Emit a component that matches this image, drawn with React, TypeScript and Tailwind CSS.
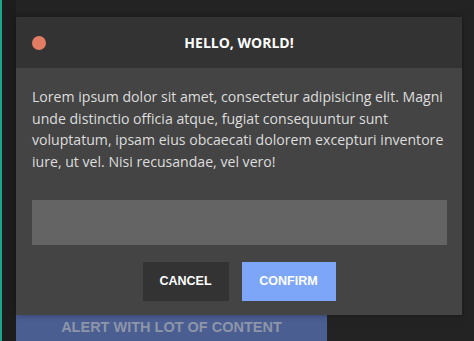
const bodyFont = { fontFamily: '"Open Sans", "Noto Sans", sans-serif' };

function ModalButton({ label, primary = false }: { label: string; primary?: boolean }) {
  const className = primary
    ? 'flex h-[39px] w-[94px] items-center justify-center bg-[#7ea6f8] text-[12.5px] font-bold text-white'
    : 'flex h-[39px] w-[86px] items-center justify-center bg-[#333333] text-[12.5px] font-bold text-white';

  return (
    <button type="button" className={className} style={{ fontFamily: '"Liberation Sans", Arial, sans-serif' }}>
      {label}
    </button>
  );
}

export default function App() {
  return (
    <div className="relative flex h-[341px] w-[474px] overflow-hidden bg-[#232323]">
      <div className="w-[2px] bg-[#1ba58a]" />
      <div className="w-[14px] bg-[#1d1d1d]" />
      <div className="flex flex-1 flex-col justify-end">
        <div
          className="flex h-[26px] w-[311px] justify-center bg-[#4b5e91] pt-[2px] text-[14.5px] font-bold text-[#8d95a8]"
          style={{ fontFamily: '"Liberation Sans", Arial, sans-serif' }}
        >
          ALERT WITH LOT OF CONTENT
        </div>
      </div>

      <div className="absolute left-[16px] top-[17px] flex h-[298px] w-[446px] flex-col bg-[#444444] shadow-[0_0_6px_rgba(0,0,0,0.35)]">
        <div className="relative flex h-[51px] items-center justify-center bg-[#333333]">
          <span className="absolute left-[16px] top-[19px] h-[14px] w-[14px] rounded-full bg-[#e27d63]" />
          <h1 className="text-[14px] font-bold text-white" style={bodyFont}>
            HELLO, WORLD!
          </h1>
        </div>

        <div className="flex flex-1 flex-col px-[16px] pt-[18px]">
          <p className="text-[14.1px] leading-[21.7px] text-[#dddddd]" style={bodyFont}>
            Lorem ipsum dolor sit amet, consectetur adipisicing elit. Magni unde distinctio officia atque, fugiat
            consequuntur sunt voluptatum, ipsam eius obcaecati dolorem excepturi inventore iure, ut vel. Nisi
            recusandae, vel vero!
          </p>
          <input className="mt-[27px] h-[45px] w-[415px] bg-[#646464] outline-none" />
          <div className="mt-[17px] flex justify-center gap-[13px]">
            <ModalButton label="CANCEL" />
            <ModalButton label="CONFIRM" primary />
          </div>
        </div>
      </div>
    </div>
  );
}
